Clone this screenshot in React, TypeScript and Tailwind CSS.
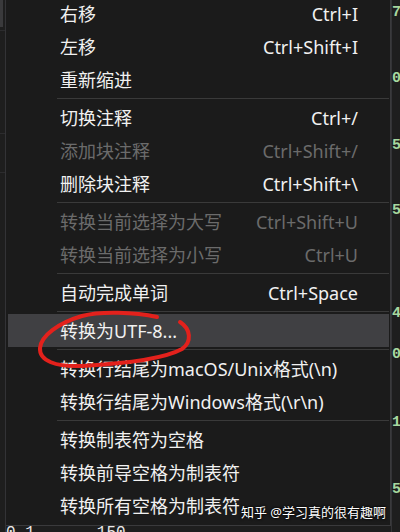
import React from "react";

type Item =
  | { kind: "item"; label: string; shortcut?: string; disabled?: boolean; active?: boolean }
  | { kind: "sep" };

const items: Item[] = [
  { kind: "item", label: "右移", shortcut: "Ctrl+I" },
  { kind: "item", label: "左移", shortcut: "Ctrl+Shift+I" },
  { kind: "item", label: "重新缩进" },
  { kind: "sep" },
  { kind: "item", label: "切换注释", shortcut: "Ctrl+/" },
  { kind: "item", label: "添加块注释", shortcut: "Ctrl+Shift+/", disabled: true },
  { kind: "item", label: "删除块注释", shortcut: "Ctrl+Shift+\\" },
  { kind: "sep" },
  { kind: "item", label: "转换当前选择为大写", shortcut: "Ctrl+Shift+U", disabled: true },
  { kind: "item", label: "转换当前选择为小写", shortcut: "Ctrl+U", disabled: true },
  { kind: "sep" },
  { kind: "item", label: "自动完成单词", shortcut: "Ctrl+Space" },
  { kind: "sep" },
  { kind: "item", label: "转换为UTF-8...", active: true },
  { kind: "sep" },
  { kind: "item", label: "转换行结尾为macOS/Unix格式(\\n)" },
  { kind: "item", label: "转换行结尾为Windows格式(\\r\\n)" },
  { kind: "sep" },
  { kind: "item", label: "转换制表符为空格" },
  { kind: "item", label: "转换前导空格为制表符" },
  { kind: "item", label: "转换所有空格为制表符" },
];

const gutterDigits = [
  { d: "7", top: 4 },
  { d: "0", top: 70 },
  { d: "5", top: 137 },
  { d: "5", top: 202 },
  { d: "4", top: 305 },
  { d: "0", top: 346 },
  { d: "1", top: 414 },
  { d: "5", top: 481 },
];

const font = { fontFamily: '"Noto Sans", "Noto Sans CJK SC", sans-serif' };

export default function App() {
  return (
    <div className="relative flex w-[400px] h-[532px] overflow-hidden bg-[#1e1e1e]" style={font}>
      {/* left editor edge */}
      <div className="flex flex-col w-[6px] shrink-0 border-r border-[#333336]">
        <div className="h-[27px] w-[3px] bg-[#3a3a3c]" />
        <div className="h-[3px]" />
        <div className="h-px bg-[#2c2c2e]" />
        <div className="h-[102px]" />
        <div className="h-px bg-[#2c2c2e]" />
        <div className="h-[38px]" />
        <div className="h-px bg-[#2c2c2e]" />
      </div>

      {/* menu */}
      <div className="flex flex-col w-[385px] shrink-0">
        <div className="-mt-[3px] h-[529px] flex flex-col bg-[#1b1b1b] border-r border-b border-[#3a3a3c] pl-[2px] pr-[1px]">
          {items.map((it, i) =>
            it.kind === "sep" ? (
              <div key={i} className="h-[5px] flex items-center pl-[49px]">
                <div className="h-px w-full bg-[#3a3a3a]" />
              </div>
            ) : (
              <div
                key={i}
                className={`h-[33px] shrink-0 flex items-center justify-between pl-[52px] pr-[31px] text-[18px] leading-none ${
                  it.active ? "bg-[#404043]" : ""
                } ${it.disabled ? "text-[#6b6b6b]" : "text-[#f1f1f1]"}`}
              >
                <span className="whitespace-nowrap">{it.label}</span>
                {it.shortcut && <span className="whitespace-nowrap">{it.shortcut}</span>}
              </div>
            )
          )}
        </div>
        <div className="h-[6px] overflow-hidden">
          <div className="-mt-[1px] text-[16px] leading-[16px] text-[#e8e8e8] whitespace-nowrap" style={{ fontFamily: '"Liberation Mono", monospace' }}>
            <span>0.1</span>
            <span className="pl-[62px]">150</span>
          </div>
        </div>
      </div>

      {/* right gutter */}
      <div className="relative w-[9px] shrink-0 border-l border-[#333336]">
        {gutterDigits.map((g, i) => (
          <span
            key={i}
            className="absolute left-0 text-[15px] leading-[18px] font-bold text-[#a7d8a0]"
            style={{ top: g.top, fontFamily: '"Liberation Mono", monospace' }}
          >
            {g.d}
          </span>
        ))}
      </div>

      {/* red hand-drawn circle annotation */}
      <svg className="absolute left-0 top-0 pointer-events-none" width="400" height="532" viewBox="0 0 400 532">
        <path
          d="M157 317 C 135 312, 100 311, 82 316 C 58 323, 41 336, 40 348 C 39 361, 56 367, 82 366 C 118 364, 162 360, 182 349 C 192 342, 191 329, 180 322"
          fill="none"
          stroke="#e3211c"
          strokeWidth="4"
          strokeLinecap="round"
        />
      </svg>

      {/* watermark */}
      <div
        className="absolute right-[14px] top-[502px] text-[13px] leading-[20px] text-white whitespace-nowrap"
        style={{ textShadow: "0 0 2px #000, 0 0 3px #000" }}
      >
        知乎 @学习真的很有趣啊
      </div>
    </div>
  );
}
